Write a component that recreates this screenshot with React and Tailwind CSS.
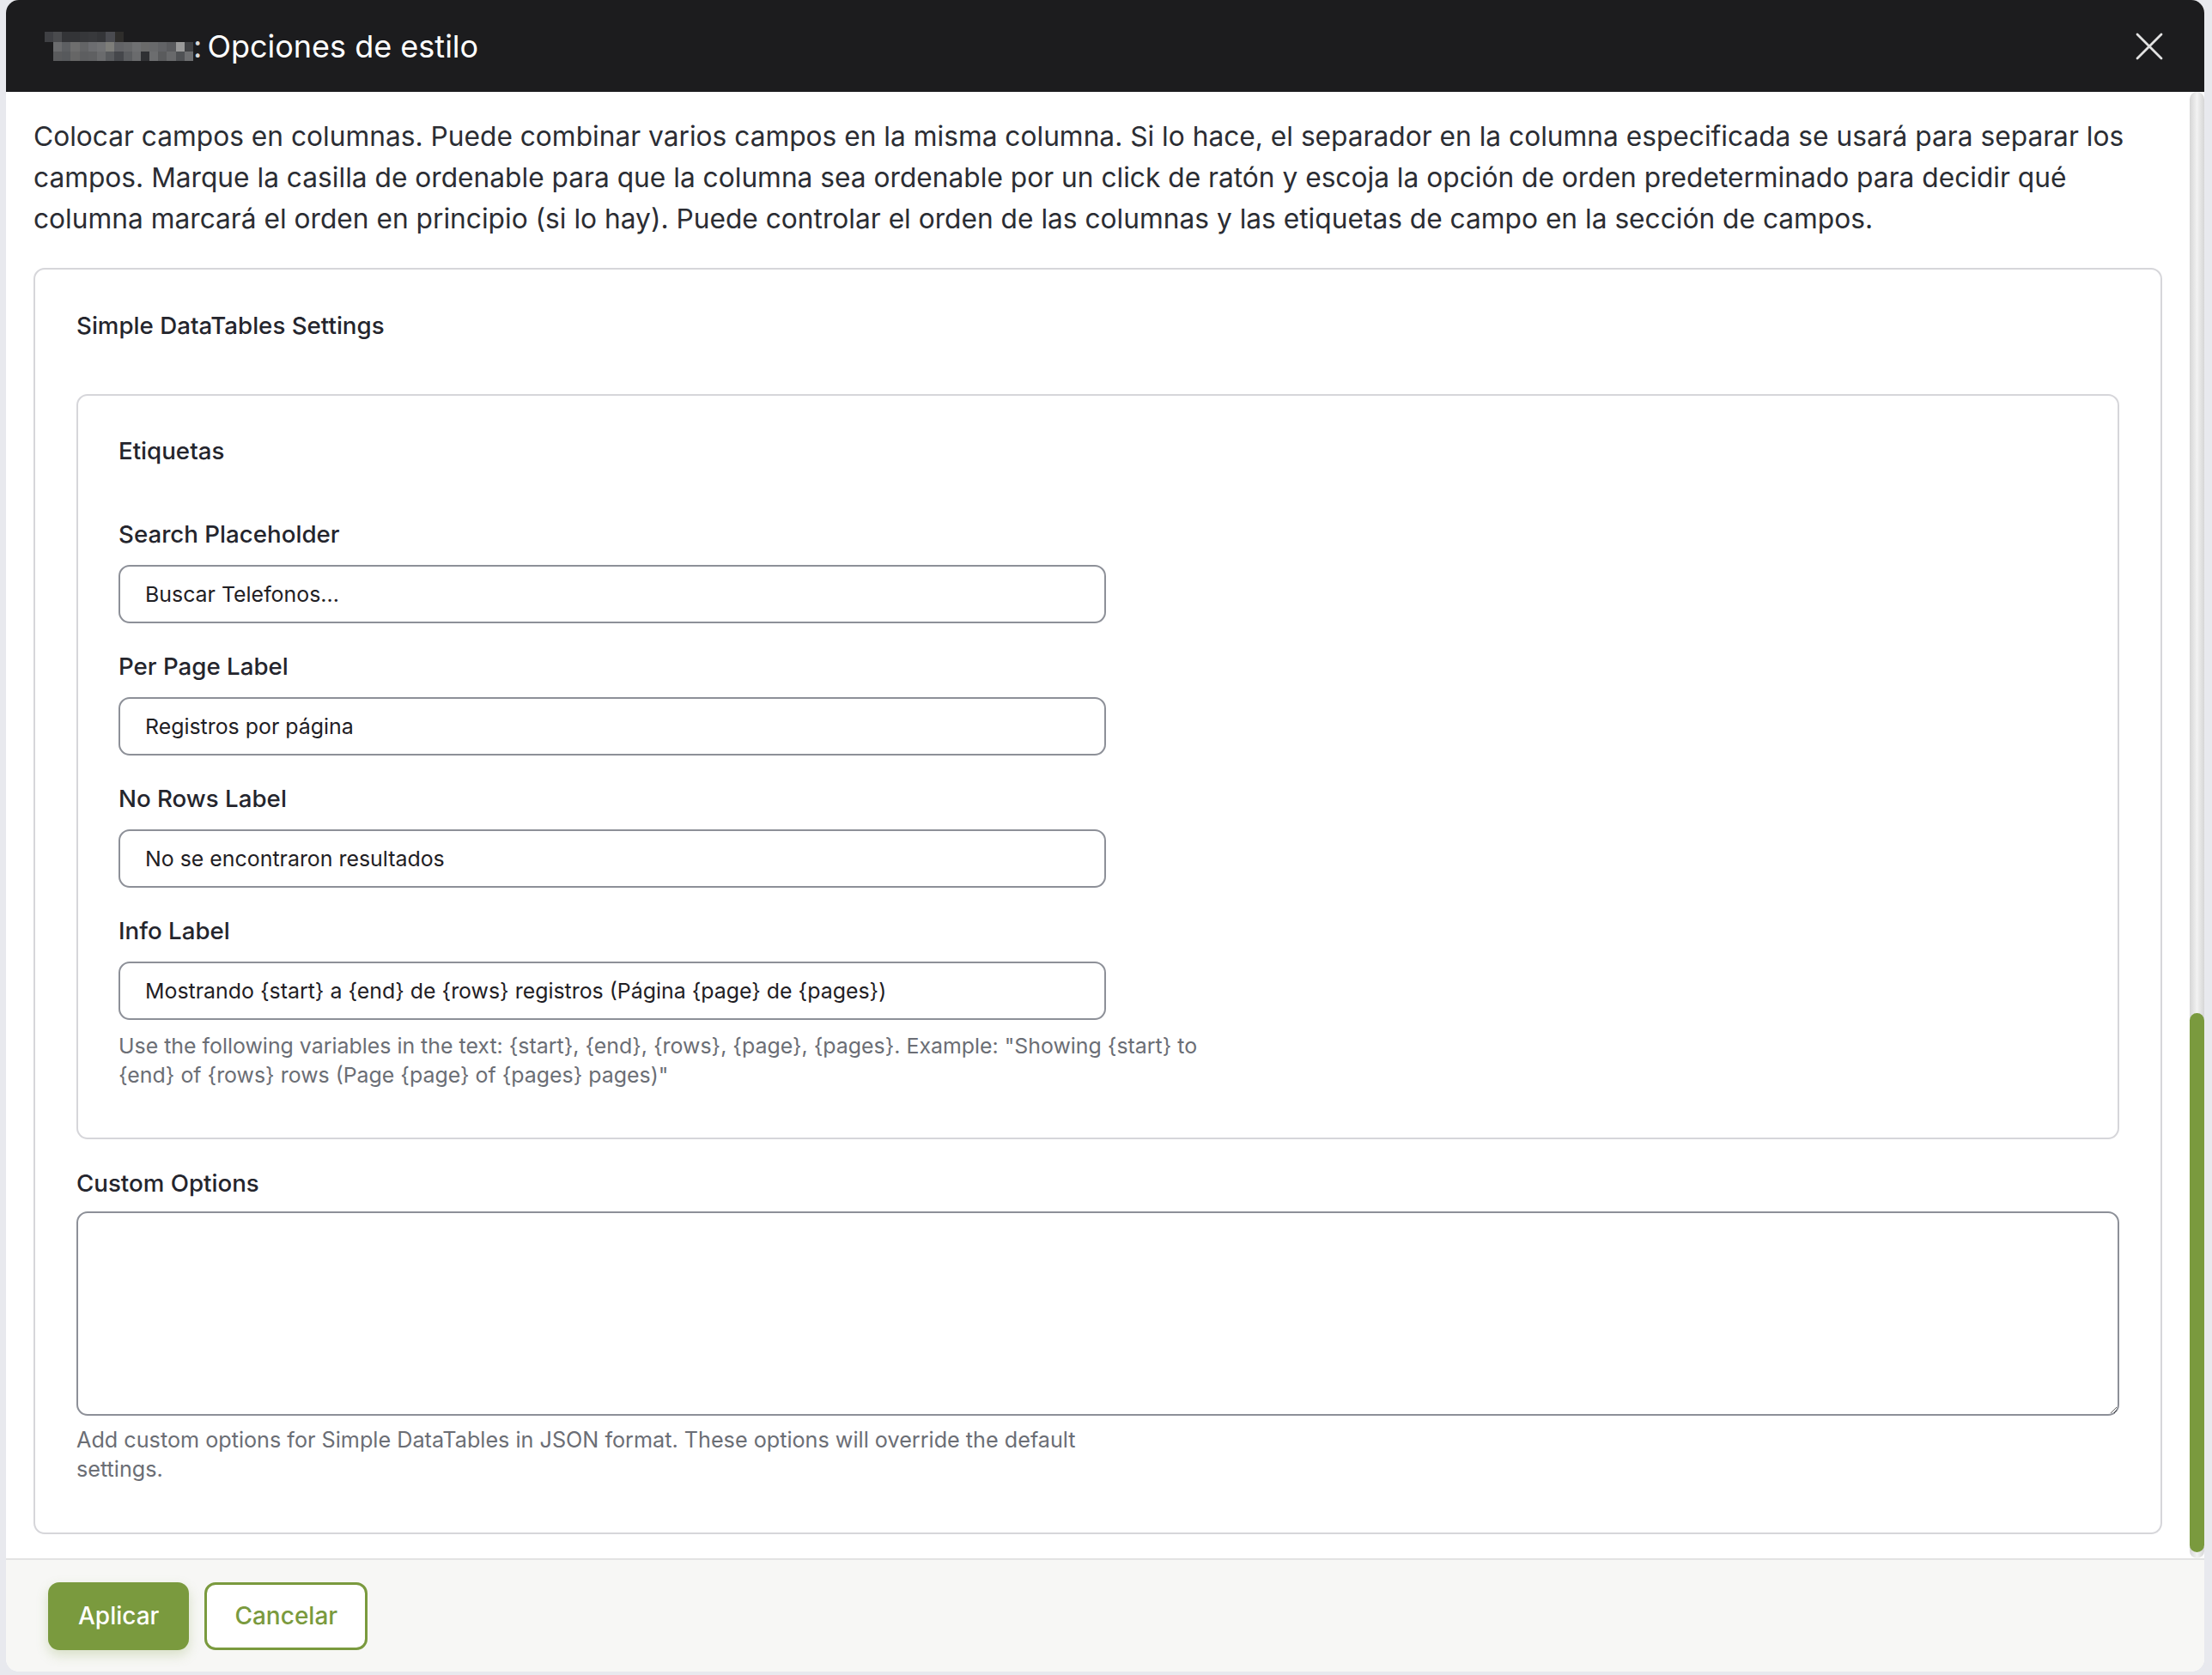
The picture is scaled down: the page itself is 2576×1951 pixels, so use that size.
const blurRow1 = [
  'bg-[#3f4044]', 'bg-[#4a4b4e]', 'bg-[#333437]', 'bg-[#333437]', 'bg-[#36373a]',
  'bg-[#38393c]', 'bg-[#343538]', 'bg-[#4a4b50]', 'bg-[#2e2d2b]',
];

const blurRow2 = [
  'bg-[#6b6c6e]', 'bg-[#5d5f62]', 'bg-[#6e6e6e]', 'bg-[#636466]', 'bg-[#6c6d70]',
  'bg-[#717274]', 'bg-[#7e7e7a]', 'bg-[#626366]', 'bg-[#666769]', 'bg-[#6f7072]',
  'bg-[#6a6a6a]', 'bg-[#68696b]', 'bg-[#626366]', 'bg-[#5a5b5e]', 'bg-[#9a9a9a]',
  'bg-[#404144]',
];

const blurRow3 = [
  'bg-[#5a5b5d]', 'bg-[#57595c]', 'bg-[#666666]', 'bg-[#5d5e60]', 'bg-[#5f6062]',
  'bg-[#6a6b6d]', 'bg-[#585a5d]', 'bg-[#45474b]', 'bg-[#5b5d60]', 'bg-[#6a6b6d]',
  'bg-[#2f3033]', 'bg-[#6c6d6f]', 'bg-[#5a5b5d]', 'bg-[#68696b]', 'bg-[#4f5154]',
  'bg-[#6d6e70]',
];

function BlurredName() {
  return (
    <div className="flex w-[173px] flex-col">
      <div className="flex h-[12px]">
        {blurRow1.map((cls, i) => (
          <span key={i} className={`h-full w-[10.2px] ${cls}`} />
        ))}
      </div>
      <div className="ml-[10px] flex h-[11px]">
        {blurRow2.map((cls, i) => (
          <span key={i} className={`h-full w-[10.2px] ${cls}`} />
        ))}
      </div>
      <div className="ml-[10px] flex h-[11px]">
        {blurRow3.map((cls, i) => (
          <span key={i} className={`h-full w-[10.2px] ${cls}`} />
        ))}
      </div>
    </div>
  );
}

function Field({ label, value, help }) {
  return (
    <div>
      <p className="text-[27.7px] font-medium leading-[34px] text-[#24252d]">{label}</p>
      <input
        readOnly
        defaultValue={value}
        className="mt-[19px] block h-[68px] w-[1150px] rounded-[13px] border-2 border-[#8d9098] bg-white px-[29px] text-[24.9px] text-[#1f2024] outline-none"
      />
      {help ? <p className="mt-[13px] whitespace-nowrap text-[24.9px] leading-[34px] text-[#6b6e75]">{help}</p> : null}
    </div>
  );
}

export default function App() {
  return (
    <div className="h-[1951px] w-[2576px] bg-[#e8e9ee] pb-[4px] pl-[7px] pr-[9px] font-['Inter',sans-serif]">
      <div className="flex h-full flex-col overflow-hidden rounded-[15px] bg-white">
        {/* header */}
        <div className="flex h-[107px] shrink-0 items-center justify-between bg-[#1c1c1e] pl-[45px] pr-[48px]">
          <div className="flex items-center">
            <BlurredName />
            <span className="text-[36px] leading-none text-[#d8d8d8]">:</span>
            <h2 className="ml-[6px] text-[36px] font-normal leading-none text-white">Opciones de estilo</h2>
          </div>
          <svg width="32" height="32" viewBox="0 0 32 32" fill="none" stroke="#e2e2e2" strokeWidth="2.8" strokeLinecap="round">
            <path d="M2 2 L30 30 M30 2 L2 30" />
          </svg>
        </div>

        {/* body */}
        <div className="flex min-h-0 flex-1">
          <div className="flex-1 px-[32px] pb-[29px] pt-[28px]">
            <p className="whitespace-nowrap text-[31.7px] leading-[48px] text-[#2b2d33]">
              Colocar campos en columnas. Puede combinar varios campos en la misma columna. Si lo hace, el separador en la
              columna especificada se usará para separar los
              <br />
              campos. Marque la casilla de ordenable para que la columna sea ordenable por un click de ratón y escoja la
              opción de orden predeterminado para decidir qué
              <br />
              columna marcará el orden en principio (si lo hay). Puede controlar el orden de las columnas y las etiquetas de
              campo en la sección de campos.
            </p>

            <div className="mt-[33px] rounded-[13px] border-2 border-[#d6d6da] px-[48px] pb-[57px] pt-[48px]">
              <p className="text-[27.7px] font-medium leading-[34px] text-[#24252d]">Simple DataTables Settings</p>

              <div className="mt-[63px] rounded-[13px] border-2 border-[#d6d6da] px-[47px] pb-[56px] pt-[47px]">
                <p className="text-[27.7px] font-medium leading-[34px] text-[#24252d]">Etiquetas</p>
                <div className="mt-[63px] flex flex-col gap-[33px]">
                  <Field label="Search Placeholder" value="Buscar Telefonos..." />
                  <Field label="Per Page Label" value="Registros por página" />
                  <Field label="No Rows Label" value="No se encontraron resultados" />
                  <Field
                    label="Info Label"
                    value="Mostrando {start} a {end} de {rows} registros (Página {page} de {pages})"
                    help={
                      <>
                        Use the following variables in the text: {'{start}, {end}, {rows}, {page}, {pages}'}. Example:
                        {' "Showing {start} to'}
                        <br />
                        {'{end} of {rows} rows (Page {page} of {pages} pages)"'}
                      </>
                    }
                  />
                </div>
              </div>

              <p className="mt-[34px] text-[27.7px] font-medium leading-[34px] text-[#24252d]">Custom Options</p>
              <textarea
                readOnly
                className="mt-[16px] block h-[238px] w-full rounded-[13px] border-2 border-[#8d9098] bg-white outline-none"
              />
              <p className="mt-[11px] whitespace-nowrap text-[25.2px] leading-[34px] text-[#6b6e75]">
                Add custom options for Simple DataTables in JSON format. These options will override the default
                <br />
                settings.
              </p>
            </div>
          </div>

          {/* scrollbar */}
          <div className="flex w-[17px] shrink-0 flex-col justify-end rounded-full bg-linear-to-r from-[#d6d6d6] via-[#f2f2f2] to-[#d6d6d6] pb-[7px]">
            <div className="h-[628px] rounded-full bg-[#7a9a3e]" />
          </div>
        </div>

        {/* footer */}
        <div className="flex h-[132px] shrink-0 items-center gap-[18px] border-t-2 border-[#e3e3e3] bg-[#f7f7f5] pl-[49px]">
          <button
            type="button"
            className="h-[79px] rounded-[13px] bg-[#7a9a3e] px-[35px] text-[28px] font-medium text-white shadow-[0_6px_14px_rgba(122,154,62,0.25)]"
          >
            Aplicar
          </button>
          <button
            type="button"
            className="h-[79px] rounded-[13px] border-[3px] border-[#7a9a3e] bg-white px-[32px] text-[28px] font-medium text-[#7a9a3e]"
          >
            Cancelar
          </button>
        </div>
      </div>
    </div>
  );
}
